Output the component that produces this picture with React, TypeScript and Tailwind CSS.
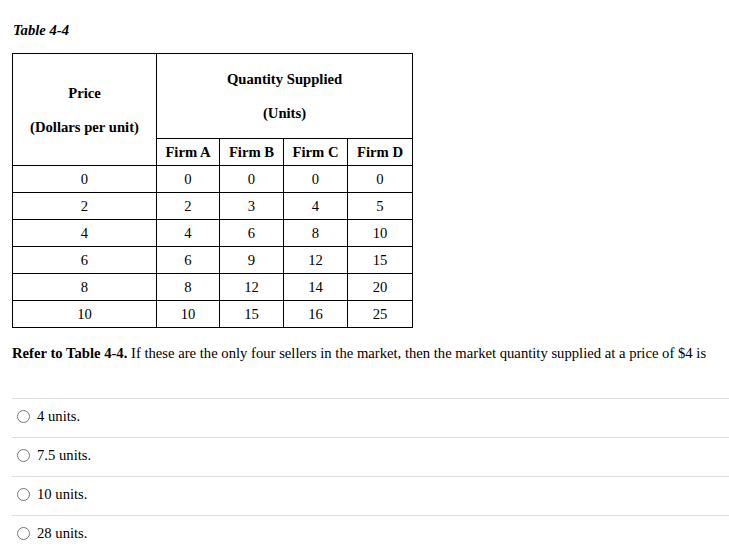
import React from "react";

const rows = [
  [0, 0, 0, 0, 0],
  [2, 2, 3, 4, 5],
  [4, 4, 6, 8, 10],
  [6, 6, 9, 12, 15],
  [8, 8, 12, 14, 20],
  [10, 10, 15, 16, 25],
];

const options = ["4 units.", "7.5 units.", "10 units.", "28 units."];

const serif = { fontFamily: '"Liberation Serif", "Times New Roman", serif' };

export default function App() {
  return (
    <div className="w-[729px] h-[547px] bg-white text-black overflow-hidden text-[14.67px]" style={serif}>
      <div className="pl-[13px] pt-[21px] italic font-bold leading-[18px]">Table 4-4</div>

      {/* Supply table */}
      <table className="ml-[12px] mt-[14px] border-collapse text-[14.67px] table-fixed w-[400px]" style={serif}>
        <colgroup>
          <col className="w-[144px]" />
          <col className="w-[63px]" />
          <col className="w-[64px]" />
          <col className="w-[64px]" />
          <col className="w-[65px]" />
        </colgroup>
        <thead>
          <tr className="h-[85px]">
            <th rowSpan={2} className="border border-black align-middle font-bold p-0">
              <div className="flex flex-col items-center gap-[17px] leading-[17px] pt-[1px]">
                <span>Price</span>
                <span>(Dollars per unit)</span>
              </div>
            </th>
            <th colSpan={4} className="border border-black align-middle font-bold p-0">
              <div className="flex flex-col items-center gap-[17px] leading-[17px]">
                <span>Quantity Supplied</span>
                <span>(Units)</span>
              </div>
            </th>
          </tr>
          <tr className="h-[27px]">
            {["Firm A", "Firm B", "Firm C", "Firm D"].map((f) => (
              <th key={f} className="border border-black font-bold p-0 leading-[17px]">
                {f}
              </th>
            ))}
          </tr>
        </thead>
        <tbody>
          {rows.map((r, i) => (
            <tr key={i} className="h-[27px]">
              {r.map((v, j) => (
                <td key={j} className="border border-black text-center p-0 leading-[17px]">
                  {v}
                </td>
              ))}
            </tr>
          ))}
        </tbody>
      </table>

      <p className="pl-[12px] mt-[16px] leading-[18px] whitespace-nowrap">
        <b>Refer to Table 4-4.</b> If these are the only four sellers in the market, then the market quantity supplied at a price of $4 is
      </p>

      <div className="ml-[12px] mt-[36px]">
        {options.map((o) => (
          <div key={o} className="border-t border-[#dddddd] h-[39px] flex items-start pt-[9px]">
            <span className="ml-[5px] mt-[2px] w-[13px] h-[13px] rounded-full border border-[#767676] bg-white" />
            <span className="ml-[7px] leading-[16px]">{o}</span>
          </div>
        ))}
      </div>
    </div>
  );
}
